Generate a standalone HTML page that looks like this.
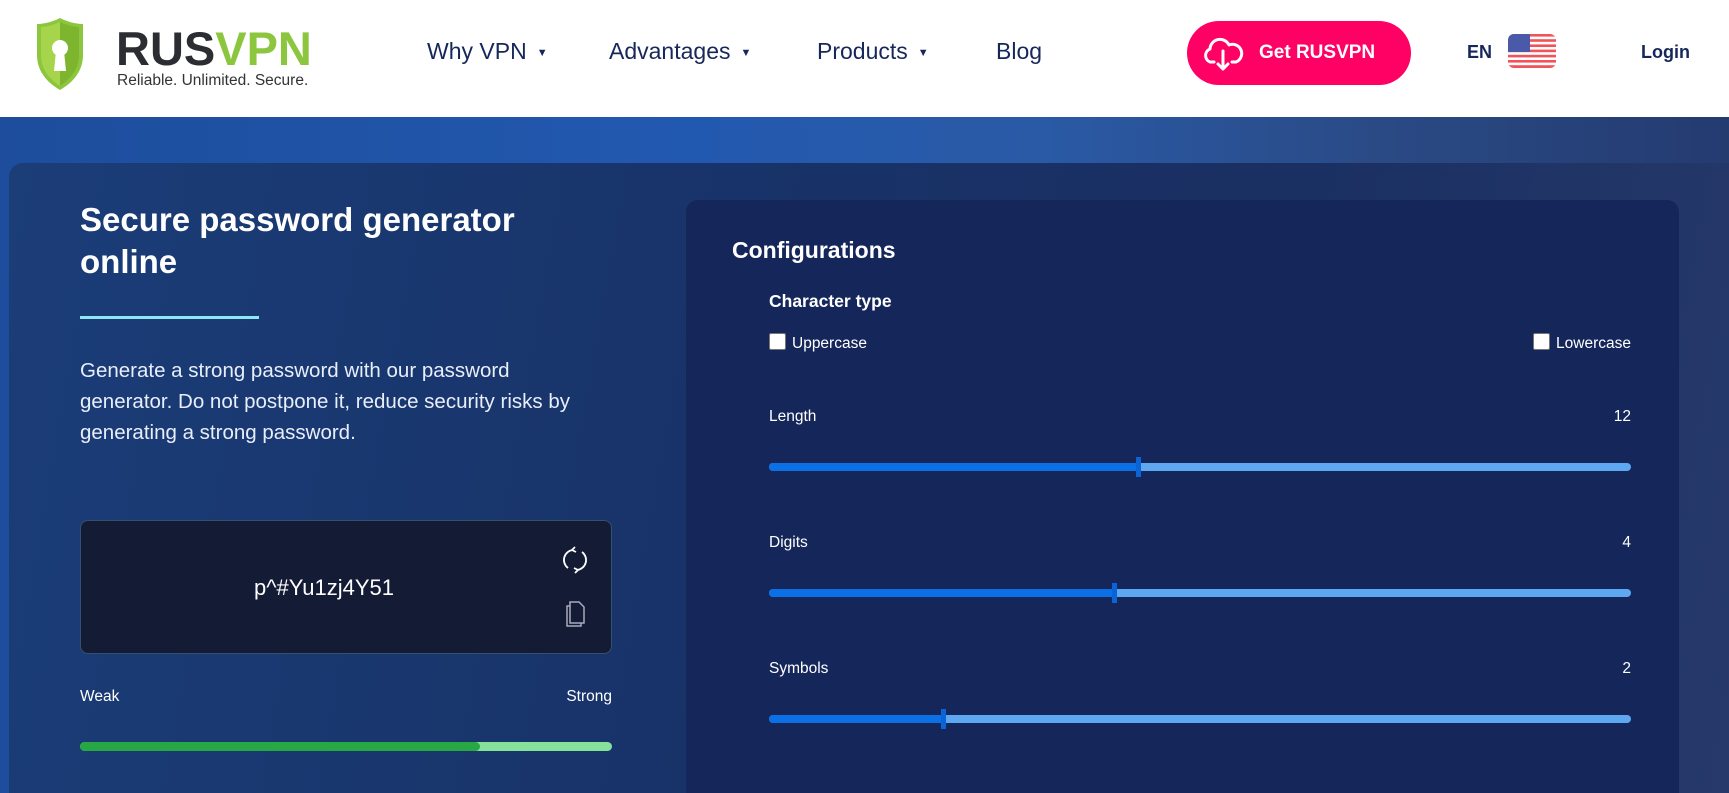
<!DOCTYPE html>
<html style="width:1729px;height:793px;overflow:hidden"><head><meta charset="utf-8"><style>
*{margin:0;padding:0;box-sizing:border-box}
body{width:1729px;height:793px;overflow:hidden;font-family:"Liberation Sans",sans-serif;background:linear-gradient(90deg,#1d4d9c 0%,#2259b0 40%,#2a5aa6 60%,#2a4a85 80%,#243b70 100%);position:relative}
header{position:absolute;left:0;top:0;width:1729px;height:117px;background:#fff}
.nav{position:absolute;top:38px;font-size:23px;color:#16275a}
.nav small{font-size:11px;margin-left:10px;vertical-align:3px}
.card{position:absolute;left:9px;top:163px;width:1720px;height:630px;border-radius:14px 0 0 0;background:linear-gradient(100deg,#1b3d78 0%,#183369 40%,#1a2f62 70%,#26396a 100%)}
.conf{position:absolute;left:686px;top:200px;width:993px;height:593px;border-radius:12px 12px 0 0;background:#15265a}
.t{position:absolute;color:#fff}
.r{position:absolute;color:#fff;text-align:right}
.slider{position:absolute;left:769px;width:862px;height:8px;border-radius:4px;background:#5ea8f2}
.slider i{position:absolute;left:0;top:0;height:8px;border-radius:4px;background:#0b6fe6}
.slider b{position:absolute;top:-6px;width:5px;height:20px;background:#0b63d6}
.cb{display:inline-block;width:17px;height:17px;background:#fff;border-radius:2px;border:1px solid #777;vertical-align:-2px;margin-right:6px}
</style></head><body>
<header>
<svg style="position:absolute;left:36px;top:17px" width="48" height="74" viewBox="0 0 48 74">
<path d="M24 1 C14 6 6 7 1 7 L1 38 C1 55 12 66 24 73 C36 66 47 55 47 38 L47 7 C42 7 34 6 24 1Z" fill="#8cc63f"/>
<path d="M24 5 C15 9 8 10 5 10 L5 38 C5 53 14 62 24 69Z" fill="#a6d44a"/>
<path d="M24 5 L24 69 C34 62 43 53 43 38 L43 10 C40 10 33 9 24 5Z" fill="#7db52f"/>
<circle cx="24" cy="31" r="8" fill="#fff"/><path d="M20 34 L18 54 L30 54 L28 34Z" fill="#fff"/>
</svg>
<div style="position:absolute;left:116px;top:25px;font-size:47px;font-weight:bold;line-height:47px"><span style="color:#2b2d33">RUS</span><span style="color:#8cc63f">VPN</span></div>
<div style="position:absolute;left:117px;top:72px;font-size:15.5px;color:#333">Reliable. Unlimited. Secure.</div>
<div class="nav" style="left:427px">Why VPN<small>▼</small></div>
<div class="nav" style="left:609px">Advantages<small>▼</small></div>
<div class="nav" style="left:817px">Products<small>▼</small></div>
<div class="nav" style="left:996px">Blog</div>
<div style="position:absolute;left:1187px;top:21px;width:224px;height:64px;border-radius:32px;background:#ff0064;color:#fff;font-weight:bold;font-size:19px;line-height:64px;padding-left:72px">Get RUSVPN</div>
<svg style="position:absolute;left:1202px;top:35px" width="42" height="38" viewBox="0 0 42 38" fill="none" stroke="#fff" stroke-width="3" stroke-linecap="round" stroke-linejoin="round"><path d="M12 27 H8 A7 7 0 0 1 8 14 A10 10 0 0 1 27 10 A8 8 0 0 1 34 27 H30"/><path d="M21 16 V34 M16 29 L21 34 L26 29"/></svg>
<div style="position:absolute;left:1467px;top:42px;font-size:18px;font-weight:bold;color:#16275a">EN</div>
<svg style="position:absolute;left:1508px;top:34px" width="48" height="34" viewBox="0 0 48 34"><defs><clipPath id="c"><rect width="48" height="34" rx="6"/></clipPath></defs><g clip-path="url(#c)"><rect width="48" height="34" fill="#fff"/><g fill="#f0545a"><rect y="0" width="48" height="2.6"/><rect y="5.2" width="48" height="2.6"/><rect y="10.4" width="48" height="2.6"/><rect y="15.6" width="48" height="2.6"/><rect y="20.8" width="48" height="2.6"/><rect y="26" width="48" height="2.6"/><rect y="31.2" width="48" height="2.8"/></g><rect width="22" height="18" fill="#4a5aa8"/></g></svg>
<div style="position:absolute;left:1641px;top:42px;font-size:18px;font-weight:bold;color:#16275a">Login</div>
</header>
<div class="card"></div>
<div class="conf"></div>
<div class="t" style="left:80px;top:199px;font-size:33px;font-weight:bold;line-height:42px;width:520px">Secure password generator online</div>
<div style="position:absolute;left:80px;top:316px;width:179px;height:3px;background:#8ee6f5"></div>
<div class="t" style="left:80px;top:355px;font-size:20.5px;line-height:31px;width:525px;color:#e8eefa">Generate a strong password with our password generator. Do not postpone it, reduce security risks by generating a strong password.</div>
<div style="position:absolute;left:80px;top:520px;width:532px;height:134px;border-radius:8px;background:#141b34;border:1px solid #33506e"></div>
<div class="t" style="left:254px;top:575px;font-size:22px">p^#Yu1zj4Y51</div>
<svg style="position:absolute;left:562px;top:546px" width="26" height="28" viewBox="0 0 26 28" fill="none" stroke="#fff" stroke-width="1.8"><path d="M6 22 A10 10 0 0 1 11 4"/><path d="M20 6 A10 10 0 0 1 15 24"/><path d="M13 1 L10 4 L14 6 M13 27 L16 24 L12 22"/></svg>
<svg style="position:absolute;left:564px;top:600px" width="22" height="28" viewBox="0 0 22 28" fill="none" stroke="#aab" stroke-width="1.5"><path d="M6 2 H15 L20 7 V23 H6Z"/><path d="M6 6 H3 V26 H17 V23"/></svg>
<div class="t" style="left:80px;top:688px;font-size:15.5px">Weak</div>
<div class="r" style="right:1117px;top:688px;font-size:15.5px">Strong</div>
<div style="position:absolute;left:80px;top:742px;width:532px;height:9px;border-radius:5px;background:#86e29a"><div style="width:400px;height:9px;border-radius:5px;background:#28a745"></div></div>
<div class="t" style="left:732px;top:237px;font-size:23px;font-weight:bold">Configurations</div>
<div class="t" style="left:769px;top:291px;font-size:17.5px;font-weight:bold">Character type</div>
<div class="t" style="left:769px;top:333px;font-size:15.5px"><span class="cb"></span>Uppercase</div>
<div class="r" style="right:98px;top:333px;font-size:15.5px"><span class="cb"></span>Lowercase</div>
<div class="t" style="left:769px;top:408px;font-size:15.5px">Length</div>
<div class="r" style="right:98px;top:408px;font-size:15.5px">12</div>
<div class="slider" style="top:463px"><i style="width:371px"></i><b style="left:367px"></b></div>
<div class="t" style="left:769px;top:534px;font-size:15.5px">Digits</div>
<div class="r" style="right:98px;top:534px;font-size:15.5px">4</div>
<div class="slider" style="top:589px"><i style="width:347px"></i><b style="left:343px"></b></div>
<div class="t" style="left:769px;top:660px;font-size:15.5px">Symbols</div>
<div class="r" style="right:98px;top:660px;font-size:15.5px">2</div>
<div class="slider" style="top:715px"><i style="width:176px"></i><b style="left:172px"></b></div>
</body></html>
